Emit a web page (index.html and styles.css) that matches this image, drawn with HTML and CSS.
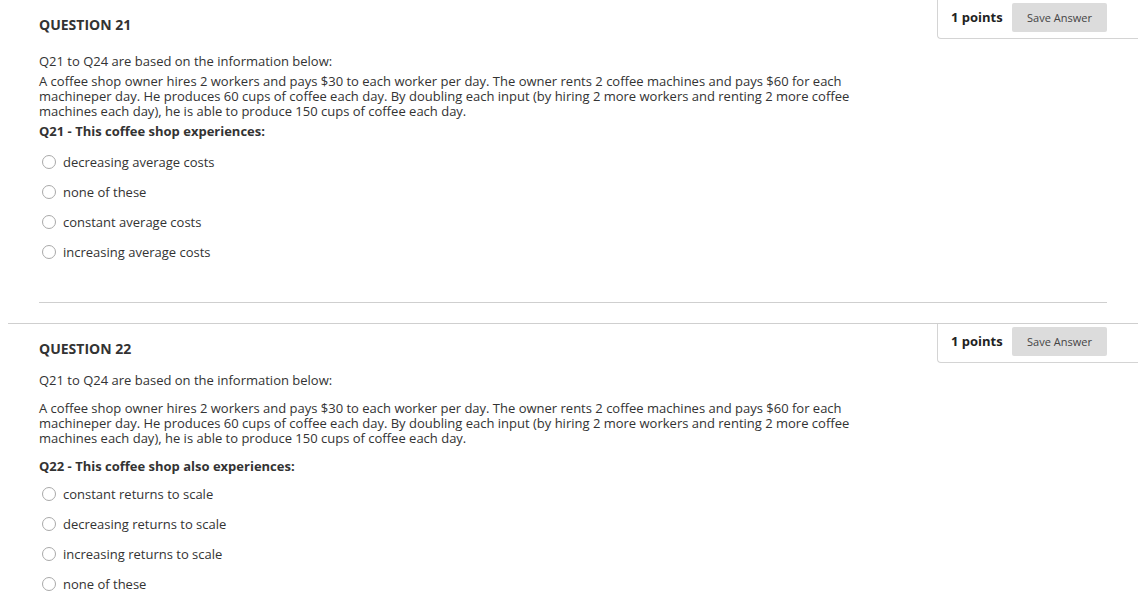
FILE: index.html
```html
<!DOCTYPE html>
<html>
<head>
<meta charset="utf-8">
<link rel="stylesheet" href="styles.css">
</head>
<body>
<div class="question q-first">
  <div class="q-header">
    <h3 class="q-title">QUESTION 21</h3>
    <div class="points-box">
      <span class="points">1 points</span>
      <button class="save-btn">Save Answer</button>
    </div>
  </div>
  <div class="q-body">
    <p class="intro intro-a">Q21 to Q24 are based on the information below:</p>
    <p class="para para-a">A coffee shop owner hires 2 workers and pays $30 to each worker per day. The owner rents 2 coffee machines and pays $60 for each<br>machineper day. He produces 60 cups of coffee each day. By doubling each input (by hiring 2 more workers and renting 2 more coffee<br>machines each day), he is able to produce 150 cups of coffee each day.</p>
    <p class="ask ask-a">Q21 - This coffee shop experiences:</p>
    <ul class="options opts-a">
      <li class="option"><span class="radio"></span>decreasing average costs</li>
      <li class="option"><span class="radio"></span>none of these</li>
      <li class="option"><span class="radio"></span>constant average costs</li>
      <li class="option"><span class="radio"></span>increasing average costs</li>
    </ul>
    <hr class="sep">
  </div>
</div>
<div class="question q-second">
  <div class="q-header">
    <h3 class="q-title">QUESTION 22</h3>
    <div class="points-box">
      <span class="points">1 points</span>
      <button class="save-btn">Save Answer</button>
    </div>
  </div>
  <div class="q-body">
    <p class="intro intro-b">Q21 to Q24 are based on the information below:</p>
    <p class="para para-b">A coffee shop owner hires 2 workers and pays $30 to each worker per day. The owner rents 2 coffee machines and pays $60 for each<br>machineper day. He produces 60 cups of coffee each day. By doubling each input (by hiring 2 more workers and renting 2 more coffee<br>machines each day), he is able to produce 150 cups of coffee each day.</p>
    <p class="ask ask-b">Q22 - This coffee shop also experiences:</p>
    <ul class="options opts-b">
      <li class="option"><span class="radio"></span>constant returns to scale</li>
      <li class="option"><span class="radio"></span>decreasing returns to scale</li>
      <li class="option"><span class="radio"></span>increasing returns to scale</li>
      <li class="option"><span class="radio"></span>none of these</li>
    </ul>
  </div>
</div>
</body>
</html>
```

FILE: styles.css
```css
html, body {
  margin: 0;
  padding: 0;
  background: #fff;
  overflow: hidden;
}
body {
  font-family: "Open Sans", "Liberation Sans", sans-serif;
  font-size: 13px;
  color: #333;
}
.question {
  margin-left: 8px;
  border-top: 1px solid #cfcfcf;
  padding-left: 31px;
}
.q-first {
  margin-top: -1px;
}
.q-second {
  margin-top: 20px;
}
.q-header {
  display: flex;
  justify-content: space-between;
  align-items: flex-start;
}
.q-title {
  margin: 16px 0 0 0;
  font-size: 14px;
  line-height: 18px;
  font-weight: 700;
  color: #333;
}
.points-box {
  width: 156px;
  height: 29px;
  padding: 3px 31px 6px 13px;
  border-left: 1px solid #d4d4d4;
  border-bottom: 1px solid #d4d4d4;
  border-bottom-left-radius: 4px;
  display: flex;
  align-items: center;
  justify-content: space-between;
}
.points {
  font-weight: 700;
  font-size: 13px;
  color: #222;
  position: relative;
  top: -1px;
}
.save-btn {
  width: 95px;
  height: 29px;
  border: none;
  border-radius: 2px;
  background: #dcdcdc;
  font-family: "Open Sans", "Liberation Sans", sans-serif;
  font-size: 11px;
  color: #444;
  padding: 0;
}
.q-body p {
  margin: 0;
  line-height: 15px;
  white-space: nowrap;
}
.intro-a { margin-top: 15px !important; }
.para-a { margin-top: 5px !important; }
.ask-a { margin-top: 5px !important; }
.intro-b { margin-top: 10px !important; }
.para-b { margin-top: 13px !important; }
.ask-b { margin-top: 13px !important; }
.ask {
  font-weight: 700;
}
.options {
  list-style: none;
  margin: 0;
  padding: 0;
}
.opts-a { margin-top: 8px; }
.opts-b { margin-top: 5px; }
.option {
  height: 30px;
  display: flex;
  align-items: center;
  padding-left: 3px;
}
.radio {
  width: 12px;
  height: 12px;
  border: 1px solid #a9a9a9;
  border-radius: 50%;
  background: #fff;
  margin-right: 7px;
  flex: none;
}
.sep {
  margin: 35px 31px 0 0;
  border: none;
  border-top: 1px solid #cfcfcf;
  height: 0;
}
```
